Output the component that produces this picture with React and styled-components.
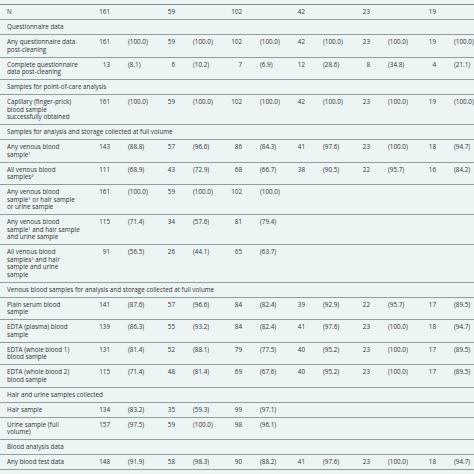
import React from 'react'
import styled, { createGlobalStyle } from 'styled-components'

const GlobalStyle = createGlobalStyle`
  html, body {
    margin: 0;
    padding: 0;
    background: #edf4f4;
    overflow: hidden;
  }
`

const Page = styled.div`
  width: 474px;
  height: 474px;
  overflow: hidden;
  padding-top: 4px;
  box-sizing: border-box;
  background: #edf4f4;
  font-family: 'Open Sans', 'DejaVu Sans', sans-serif;
  color: #2f3232;
`

const Table = styled.table`
  width: 500px;
  table-layout: fixed;
  border-collapse: collapse;
  border-top: 1.5px solid #869292;
  font-size: 6.3px;
  line-height: 7.5px;
`

const Row = styled.tr`
  border-bottom: 1px solid #939d9d;
`

const Cell = styled.td`
  padding: 3.25px 0;
  vertical-align: top;
  white-space: nowrap;
  overflow: visible;
`

const Label = styled(Cell)`
  padding-left: 7px;
`

const Num = styled(Cell)`
  text-align: right;
  padding-right: 18px;
`

const Pct = styled(Cell)`
  text-align: left;
`

const Section = styled(Cell)`
  padding-left: 7px;
`

const Sup = styled.sup`
  font-size: 4.2px;
  line-height: 0;
  vertical-align: 2.4px;
`

const widths = [96, 32, 30, 35, 32, 35, 30, 33, 32, 33, 32, 34, 46]

const rows = [
  { label: ['N'], values: [[161], [59], [102], [42], [23], [19]] },
  { section: 'Questionnaire data' },
  {
    label: ['Any questionnaire data', 'post-cleaning'],
    values: [[161, '100.0'], [59, '100.0'], [102, '100.0'], [42, '100.0'], [23, '100.0'], [19, '100.0']],
  },
  {
    label: ['Complete questionnaire', 'data post-cleaning'],
    values: [[13, '8.1'], [6, '10.2'], [7, '6.9'], [12, '28.6'], [8, '34.8'], [4, '21.1']],
  },
  { section: 'Samples for point-of-care analysis' },
  {
    label: ['Capillary (finger-prick)', 'blood sample', 'successfully obtained'],
    values: [[161, '100.0'], [59, '100.0'], [102, '100.0'], [42, '100.0'], [23, '100.0'], [19, '100.0']],
  },
  { section: 'Samples for analysis and storage collected at full volume' },
  {
    label: ['Any venous blood', ['sample', '1']],
    values: [[143, '88.8'], [57, '96.6'], [86, '84.3'], [41, '97.6'], [23, '100.0'], [18, '94.7']],
  },
  {
    label: ['All venous blood', ['samples', '2']],
    values: [[111, '68.9'], [43, '72.9'], [68, '66.7'], [38, '90.5'], [22, '95.7'], [16, '84.2']],
  },
  {
    label: ['Any venous blood', ['sample', '1', ' or hair sample'], 'or urine sample'],
    values: [[161, '100.0'], [59, '100.0'], [102, '100.0']],
  },
  {
    label: ['Any venous blood', ['sample', '1', ' and hair sample'], 'and urine sample'],
    values: [[115, '71.4'], [34, '57.6'], [81, '79.4']],
  },
  {
    label: ['All venous blood', ['samples', '2', ' and hair'], 'sample and urine', 'sample'],
    values: [[91, '56.5'], [26, '44.1'], [65, '63.7']],
  },
  { section: 'Venous blood samples for analysis and storage collected at full volume' },
  {
    label: ['Plain serum blood', 'sample'],
    values: [[141, '87.6'], [57, '96.6'], [84, '82.4'], [39, '92.9'], [22, '95.7'], [17, '89.5']],
  },
  {
    label: ['EDTA (plasma) blood', 'sample'],
    values: [[139, '86.3'], [55, '93.2'], [84, '82.4'], [41, '97.6'], [23, '100.0'], [18, '94.7']],
  },
  {
    label: ['EDTA (whole blood 1)', 'blood sample'],
    values: [[131, '81.4'], [52, '88.1'], [79, '77.5'], [40, '95.2'], [23, '100.0'], [17, '89.5']],
  },
  {
    label: ['EDTA (whole blood 2)', 'blood sample'],
    values: [[115, '71.4'], [48, '81.4'], [69, '67.6'], [40, '95.2'], [23, '100.0'], [17, '89.5']],
  },
  { section: 'Hair and urine samples collected' },
  {
    label: ['Hair sample'],
    values: [[134, '83.2'], [35, '59.3'], [99, '97.1']],
  },
  {
    label: ['Urine sample (full', 'volume)'],
    values: [[157, '97.5'], [59, '100.0'], [98, '96.1']],
  },
  { section: 'Blood analysis data' },
  {
    label: ['Any blood test data'],
    values: [[148, '91.9'], [58, '98.3'], [90, '88.2'], [41, '97.6'], [23, '100.0'], [18, '94.7']],
  },
  {
    label: ['Complete blood test'],
    values: [[125, '77.6'], [53, '89.8'], [72, '70.6'], [29, '69.0'], [16, '69.6'], [13, '68.4']],
  },
]

const LabelLine = ({ line }) => {
  if (Array.isArray(line)) {
    const [text, sup, rest] = line
    return (
      <div>
        {text}
        <Sup>{sup}</Sup>
        {rest}
      </div>
    )
  }
  return <div>{line}</div>
}

const DataRow = ({ row }) => {
  const cells = []
  for (let i = 0; i < 6; i++) {
    const v = row.values[i] || []
    cells.push(<Num key={`n${i}`}>{v[0]}</Num>)
    cells.push(<Pct key={`p${i}`}>{v[1] ? `(${v[1]})` : ''}</Pct>)
  }
  return (
    <Row>
      <Label>
        {row.label.map((l, i) => (
          <LabelLine key={i} line={l} />
        ))}
      </Label>
      {cells}
    </Row>
  )
}

export default function App() {
  return (
    <>
      <GlobalStyle />
      <Page>
        <Table>
          <colgroup>
            {widths.map((w, i) => (
              <col key={i} style={{ width: w }} />
            ))}
          </colgroup>
          <tbody>
            {rows.map((row, i) =>
              row.section ? (
                <Row key={i}>
                  <Section colSpan={13}>{row.section}</Section>
                </Row>
              ) : (
                <DataRow key={i} row={row} />
              )
            )}
          </tbody>
        </Table>
      </Page>
    </>
  )
}
